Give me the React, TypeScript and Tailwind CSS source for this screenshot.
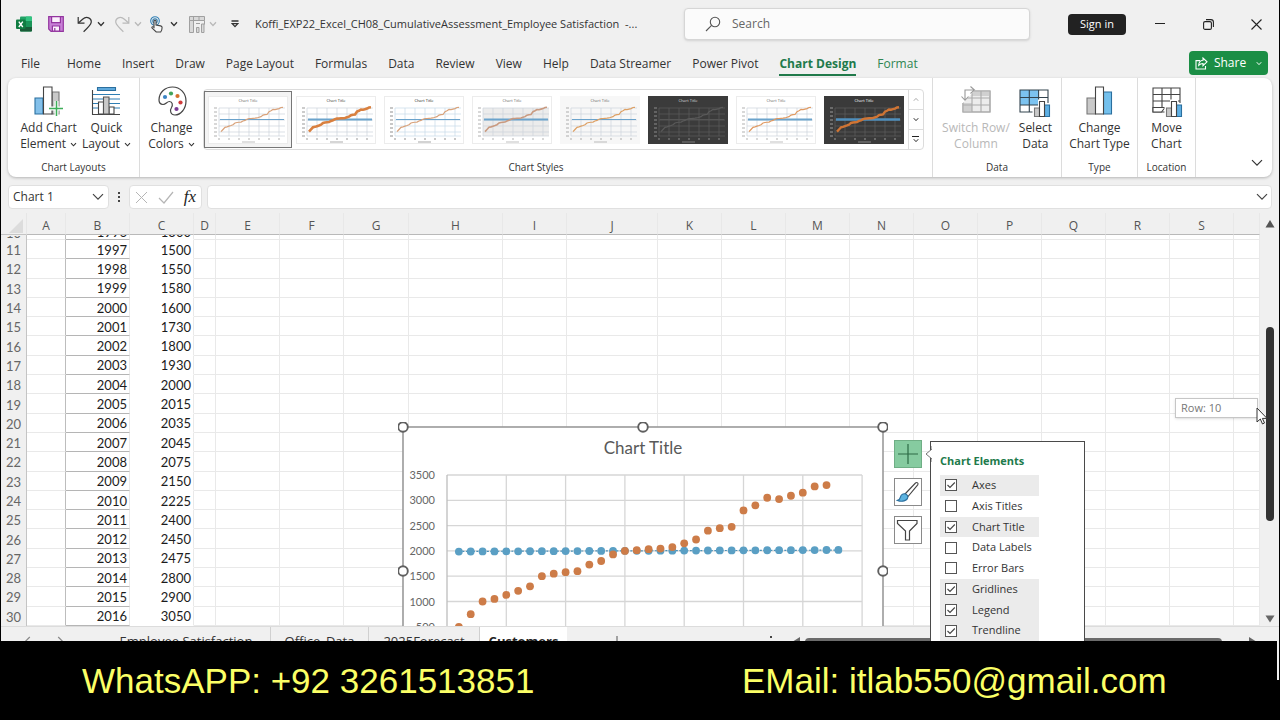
import type { ReactNode } from 'react';
import clsx from 'clsx';

const tabs = [
  'Home', 'Insert', 'Draw', 'Page Layout', 'Formulas', 'Data', 'Review',
  'View', 'Help', 'Data Streamer', 'Power Pivot',
];

const columns = [
  { name: 'A', width: 39 },
  { name: 'B', width: 64 },
  { name: 'C', width: 64 },
  { name: 'D', width: 22 },
  { name: 'E', width: 64 },
  { name: 'F', width: 64 },
  { name: 'G', width: 65 },
  { name: 'H', width: 94 },
  { name: 'I', width: 64 },
  { name: 'J', width: 91 },
  { name: 'K', width: 64 },
  { name: 'L', width: 64 },
  { name: 'M', width: 64 },
  { name: 'N', width: 64 },
  { name: 'O', width: 64 },
  { name: 'P', width: 64 },
  { name: 'Q', width: 64 },
  { name: 'R', width: 64 },
  { name: 'S', width: 64 },
  { name: '', width: 0 },
];

// customers per year, 1987 onwards
const customers = [
  500, 750, 1000, 1050, 1130, 1210, 1300, 1500, 1550, 1580, 1600, 1730, 1800, 1930, 2000, 2015,
  2035, 2045, 2075, 2150, 2225, 2400, 2450, 2475, 2800, 2900, 3050, 3025, 3090, 3150, 3275, 3300,
];

const rows = [
  [1997, 1500], [1998, 1550], [1999, 1580], [2000, 1600], [2001, 1730], [2002, 1800], [2003, 1930],
  [2004, 2000], [2005, 2015], [2006, 2035], [2007, 2045], [2008, 2075], [2009, 2150], [2010, 2225],
  [2011, 2400], [2012, 2450], [2013, 2475], [2014, 2800], [2015, 2900], [2016, 3050],
];

const chartElements = [
  { name: 'Axes', on: true },
  { name: 'Axis Titles', on: false },
  { name: 'Chart Title', on: true },
  { name: 'Data Labels', on: false },
  { name: 'Error Bars', on: false },
  { name: 'Gridlines', on: true },
  { name: 'Legend', on: true },
  { name: 'Trendline', on: true },
];

const Chevron = ({ className = 'h-[6px] w-[8px]' }: { className?: string }) => (
  <svg viewBox="0 0 8 6" className={clsx('shrink-0', className)} fill="none" stroke="currentColor" strokeWidth="1.3">
    <path d="M1 1.3 4 4.5 7 1.3" />
  </svg>
);

const WideChevron = ({ className }: { className?: string }) => (
  <svg viewBox="0 0 12 8" className={clsx('h-2 w-3 shrink-0', className)} fill="none" stroke="currentColor" strokeWidth="1.2">
    <path d="M1 1.200 6 6.200l5-5" />
  </svg>
);

/* ---------- title bar ---------- */

const ExcelLogo = () => (
  <svg viewBox="0 0 16 16" className="h-4 w-4">
    <rect x="4" y="0.5" width="12" height="15" rx="1" fill="#21a366" />
    <path d="M4 5h6v6H4z" fill="#107c41" />
    <path d="M10 0.5h5a1 1 0 0 1 1 1V5h-6z" fill="#33c481" />
    <path d="M10 5h6v6h-6z" fill="#1a9458" />
    <path d="M4 11h12v3.5a1 1 0 0 1-1 1H5a1 1 0 0 1-1-1z" fill="#185c37" />
    <rect x="0" y="3.5" width="9.5" height="9.5" rx="1" fill="#107c41" />
    <path d="m2.800 5.600 4 5.400M6.800 5.600l-4 5.400" stroke="#fff" strokeWidth="1.400" />
  </svg>
);

const SaveIcon = () => (
  <svg viewBox="0 0 16 16" className="h-4 w-4" fill="#c77fd6" stroke="#93359f" strokeWidth="1.2">
    <path d="M.7.7h14.6v14.6H3L.7 13z" />
    <path d="M3.6.7h8.8v6H3.6z" fill="#fbeffc" />
    <path d="M4.4 15.2V10h7.2v5.2z" fill="#fbeffc" />
    <path d="M6.8 15v-3" fill="none" />
  </svg>
);

const UndoIcon = () => (
  <svg viewBox="0 0 16 17" className="h-[17px] w-4" fill="none" stroke="currentColor" strokeWidth="1.2">
    <path d="M1.200 1v6.200h6.300" />
    <path d="M1.400 7 5.600 3.200C9.600-.3 14.800 2 14.200 6.400c-.3 2.300-2.200 4.300-7.600 9.400" />
  </svg>
);

const TouchIcon = () => (
  <svg viewBox="0 0 14 17" className="h-[17px] w-[14px]" fill="none" strokeWidth="1.1">
    <circle cx="5" cy="5" r="4.3" stroke="#2f7fb5" />
    <circle cx="5" cy="5" r="2.2" stroke="#2f7fb5" />
    <path
      d="M4 11.500V5.200c0-1.400 2-1.400 2 0V9l4.600.9c1 .2 1.500.8 1.500 1.700 0 1.600-.5 3.200-1.400 4.400H6.200L2 12c-.5-.9.4-1.600 1.200-1.100z"
      fill="#f7f7f7"
      stroke="#444"
    />
  </svg>
);

const PivotIcon = () => (
  <svg viewBox="0 0 16 17" className="h-[17px] w-4" fill="#d9d9d9" stroke="#a0a0a0">
    <path d="M.5.5h15v4h-15zM.5 4.500h4v12h-4z" />
    <path d="M4.500.5v4M10 .5v4M15.500 4.500v4" fill="none" />
    <path d="M7.500 16.500v-5h2.500v5zM12.500 16.500V8H15v8.500zM7 7.500h4" />
  </svg>
);

const TitleBar = () => (
  <header className="flex h-12 shrink-0 items-center pr-[17px] pl-[15px] text-[#333]">
    <div className="flex items-center">
      <ExcelLogo />
      <button aria-label="Save" className="ml-4"><SaveIcon /></button>
      <button aria-label="Undo" className="ml-[13px] flex items-center gap-1"><UndoIcon /><Chevron /></button>
      <button aria-label="Redo" className="ml-[9px] flex items-center gap-1 text-[#b9b9b9]">
        <span className="-scale-x-100"><UndoIcon /></span>
        <Chevron />
      </button>
      <button aria-label="Touch mode" className="ml-2 flex items-center gap-[6px]"><TouchIcon /><Chevron /></button>
      <button aria-label="PivotTable" className="ml-[11px] flex items-center gap-1 text-[#b9b9b9]"><PivotIcon /><Chevron /></button>
      <button aria-label="Customize toolbar" className="ml-[14px]">
        <svg viewBox="0 0 8 8" className="h-2 w-2" fill="none" stroke="currentColor" strokeWidth="1.3">
          <path d="M.5 1h7M1.200 3.600h5.600L4 6.600z" />
        </svg>
      </button>
    </div>
    <h1 className="ml-4 w-[394px] shrink-0 text-[11px] whitespace-pre">
      Koffi_EXP22_Excel_CH08_CumulativeAssessment_Employee Satisfaction  -...
    </h1>
    <label className="ml-[35px] flex h-8 w-[346px] items-center gap-[11px] rounded border border-[#d6d6d6] bg-[#fbfbfb] px-5 shadow-sm">
      <svg viewBox="0 0 16 16" className="h-4 w-4 shrink-0" fill="none" stroke="#555" strokeWidth="1.100">
        <circle cx="10" cy="6" r="4.700" />
        <path d="M6.600 9.400 1 15" />
      </svg>
      <input type="search" placeholder="Search" className="w-full bg-transparent text-xs outline-none placeholder:text-[#666]" />
    </label>
    <div className="ml-auto flex items-center">
      <button className="h-[21px] w-[58px] rounded-sm bg-[#222] text-[11px] text-white">Sign in</button>
      <button aria-label="Minimize" className="ml-[29px]">
        <svg viewBox="0 0 10 10" className="h-[10px] w-[10px]" stroke="#222"><path d="M0 4.500h10" /></svg>
      </button>
      <button aria-label="Restore" className="ml-[38px]">
        <svg viewBox="0 0 11 11" className="h-[11px] w-[11px]" fill="none" stroke="#222" strokeWidth="1.100">
          <rect x=".6" y="2.600" width="7.800" height="7.800" rx="1.500" />
          <path d="M3 .6h4.900a2.500 2.500 0 0 1 2.500 2.500V8" />
        </svg>
      </button>
      <button aria-label="Close" className="ml-[37px]">
        <svg viewBox="0 0 11 11" className="h-[11px] w-[11px]" stroke="#222" strokeWidth="1.100">
          <path d="m.5.5 10 10M10.500.5l-10 10" />
        </svg>
      </button>
    </div>
  </header>
);

const TabBar = () => (
  <nav className="flex h-[30px] shrink-0 items-center pr-[11px] pl-5 text-xs text-[#333]">
    <div className="flex items-center gap-[21px] pt-[2px] whitespace-nowrap">
      <a href="#file" className="mr-[6px]">File</a>
      {tabs.map(tab => <a key={tab} href={`#${tab}`}>{tab}</a>)}
      <a href="#design" className="-mb-1 border-b-2 border-[#217a4b] pb-0.5 font-bold text-[#217a4b]">Chart Design</a>
      <a href="#format" className="text-[#2f8551]">Format</a>
    </div>
    <button className="ml-auto flex h-6 w-[79px] items-center justify-between rounded bg-[#1b8e45] px-[6px] text-white">
      <svg viewBox="0 0 13 13" className="h-[13px] w-[13px]" fill="none" stroke="currentColor" strokeWidth="1.100">
        <path d="M5 3.600H1v8.400h9.500V9" />
        <path d="M8 1v2.300C5.200 3.500 3.900 5.500 3.700 8.300 5 6.900 6.300 6.500 8 6.500v2.200l4-3.900z" />
      </svg>
      Share
      <Chevron className="ml-1 h-[5px] w-[6px]" />
    </button>
  </nav>
);

/* ---------- ribbon ---------- */

const AddElementIcon = () => (
  <svg viewBox="0 0 30 32" className="h-8 w-[30px]" strokeWidth="1.100">
    <path d="M1 12h8v16H1z" fill="#83c0ea" stroke="#2b6f9e" />
    <path d="M18 6h7v22h-7z" fill="#c9c9c9" stroke="#777" />
    <path d="M9.500 1H18v27H9.500z" fill="#fff" stroke="#444" />
    <path d="M22.500 15v15M15 22.500h14" stroke="#fff" strokeWidth="4" />
    <path d="M22.500 15v15M15 22.500h14" stroke="#3fae5a" strokeWidth="1.500" />
  </svg>
);

const QuickLayoutIcon = () => (
  <svg viewBox="0 0 30 32" className="h-8 w-[30px]" strokeWidth="1.100">
    <path d="M6.500 1.500h18v3h-18z" fill="#5fa9dc" stroke="#2b6f9e" />
    <path d="M2 8.500h27M2 13h27M2 17.500h27M2 22h27" stroke="#2f7fb5" />
    <path d="M1.500 4v24.500H29" fill="none" stroke="#444" />
    <path d="M7.500 16h5v12h-5zM18 21h5v7h-5z" fill="#fff" stroke="#444" />
    <path d="M12.500 11H18v17h-5.500z" fill="#c9c9c9" stroke="#555" />
  </svg>
);

const PaletteIcon = () => (
  <svg viewBox="0 0 30 32" className="h-8 w-[30px]">
    <path
      d="M2 14C2 6 8.500 1 15.500 1 23.500 1 29 7.500 29 15c0 8-5.500 14-11 14-4.500 0-5.500-4.500-3.500-7.500 1.500-2.500 1-6-2-6-2.800 0-3.500 3-6.500 3C3.500 18.500 2 16.500 2 14z"
      fill="#fff"
      stroke="#444"
      strokeWidth="1.200"
    />
    <circle cx="8" cy="11" r="2.100" fill="#3b85c4" />
    <circle cx="14" cy="7.500" r="2.100" fill="#42a35a" />
    <circle cx="20.500" cy="10" r="2.100" fill="#d5702b" />
    <circle cx="23.500" cy="16.500" r="2.100" fill="#cf3b3b" />
    <circle cx="19.500" cy="23" r="2.100" fill="#7b3b93" />
  </svg>
);

const SmallBars = ({ x, y }: { x: number; y: number }) => (
  <g transform={`translate(${x} ${y})`} strokeWidth="1.100">
    <path d="M-1.500 5H4v-6.500h8V2h5v15H-1.500z" fill="#fff" stroke="none" />
    <path d="M.5 7h5v8.500h-5z" fill="#c9c9c9" stroke="#777" />
    <path d="M10.500 4h5v11.500h-5z" fill="#5fb0e4" stroke="#2b6f9e" />
    <path d="M5.500.5h5v15h-5z" fill="#fff" stroke="#444" />
  </g>
);

const SwitchIcon = () => (
  <svg viewBox="0 0 30 32" className="h-8 w-[30px]" fill="none" stroke="#aaa" strokeWidth="1.100">
    <path d="M2 5h27v21H2z" fill="#ececec" />
    <path d="M2 17h9v9H2zM11 5h18v5H11z" fill="#d0d0d0" stroke="none" />
    <path d="M2 5h27v21H2zM11 5v21M20 5v21M2 12h27M2 19h27" />
    <path d="M0 0h18L2 17H0z" fill="#fff" stroke="none" />
    <path d="M4 14V4h9M9.500.5l4 3.500-4 3.500M.5 10.500 4 14.300l3.500-3.800" stroke="#999" />
  </svg>
);

const SelectDataIcon = () => (
  <svg viewBox="0 0 32 32" className="h-8 w-8" strokeWidth="1.100">
    <path d="M1 4h28v22H1z" fill="#fff" />
    <path d="M1 4h18.600v15H1z" fill="#7cc3f0" />
    <path d="M1 4h28v22H1zM10.300 4v22M19.600 4v22M1 11.500h28M1 19h28" fill="none" stroke="#33444f" />
    <SmallBars x={15} y={15} />
  </svg>
);

const ChartTypeIcon = () => (
  <svg viewBox="0 0 30 32" className="h-8 w-[30px]" strokeWidth="1.100">
    <path d="M2 12h8.500v16H2z" fill="#c9c9c9" stroke="#777" />
    <path d="M18.500 6h8v22h-8z" fill="#74c0ec" stroke="#2b6f9e" />
    <path d="M10.500 1h8v27h-8z" fill="#fff" stroke="#444" />
  </svg>
);

const MoveChartIcon = () => (
  <svg viewBox="0 0 32 32" className="h-8 w-8" fill="none" stroke="#444" strokeWidth="1.100">
    <path d="M2 2h27v24H2zM11 2v20M20 2v20M2 8.500h27M2 15h27" />
    <path d="M2 21.500h12l-3.500 4.500H2z" fill="#fff" />
    <SmallBars x={15} y={15} />
  </svg>
);

type RibbonButtonProps = { icon: ReactNode; lines: [string, string]; menu?: boolean; disabled?: boolean };

const RibbonButton = ({ icon, lines, menu, disabled }: RibbonButtonProps) => (
  <button
    disabled={disabled}
    className="flex flex-col items-center text-xs leading-4 whitespace-nowrap text-[#333] disabled:text-[#b8b8b8]"
  >
    {icon}
    <span className="mt-0.5">{lines[0]}</span>
    <span className="flex items-center gap-1">{lines[1]}{menu && <Chevron className="h-[5px] w-[7px]" />}</span>
  </button>
);

const RibbonGroup = ({ label, className, children }: { label: string; className: string; children: ReactNode }) => (
  <section className={clsx('flex flex-col items-center pt-2', className)}>
    <div className="flex w-full flex-1 items-start justify-center">{children}</div>
    <h2 className="pb-[2px] text-[10px] leading-4 text-[#333]">{label}</h2>
  </section>
);

const thumbLine = customers.map((v, i) => `${13 + i * 2},${40 - v / 115}`).join(' ');

type ThumbStyle = { bg: string; grid: string; text: string; line: string; width: number; blue: string; blueWidth: number; plot?: string };

const light: ThumbStyle = { bg: '#ffffff', grid: '#ccd3db', text: '#666', line: '#d9a27a', width: 1.2, blue: '#6ba3cc', blueWidth: 1.2 };

const thumbs: ThumbStyle[] = [
  light,
  { ...light, line: '#d9803f', width: 2.6, blueWidth: 2, text: '#333' },
  { ...light, text: '#222', grid: '#c6dae8' },
  { ...light, line: '#c99a80', width: 1.6, blueWidth: 2, plot: '#ececec' },
  { ...light, bg: '#f7f7f7', line: '#dda064' },
  { ...light, bg: '#3b3b3b', grid: '#5c5c5c', text: '#ddd', line: '#595959', blue: '#555' },
  { ...light, line: '#e09a62', blueWidth: 1.8 },
  { ...light, bg: '#3a3a3a', grid: '#5e5e5e', text: '#fff', line: '#cf7434', width: 2.4, blue: '#4f8fbd', blueWidth: 2.4 },
];

const Thumb = ({ style: s }: { style: ThumbStyle }) => (
  <svg viewBox="0 0 80 48" className="h-12 w-20">
    <rect x=".5" y=".5" width="79" height="47" fill={s.bg} stroke={s.bg === '#ffffff' ? '#ececec' : s.bg} />
    <rect x="11" y="12" width="66" height="28" fill={s.plot ?? 'none'} />
    <text x="40" y="6" fontSize="4" textAnchor="middle" fill={s.text} fontFamily="Open Sans">Chart Title</text>
    <path d="M11 12v28M21 12v28M31 12v28M41 12v28M51 12v28M61 12v28M71 12v28M11 12h66M11 18h66M11 24h66M11 30h66M11 36h66M11 40h66" stroke={s.grid} strokeWidth=".7" fill="none" />
    <path d="M6 12h3M6 16h3M6 20h3M6 24h3M6 28h3M6 32h3M6 36h3M6 40h3" stroke={s.text} strokeOpacity=".5" strokeWidth="1.200" />
    <path d="M10 43h68" stroke={s.text} strokeOpacity=".5" strokeWidth="1.200" strokeDasharray="2 8" />
    <path d="M34 46h13" stroke={s.text} strokeOpacity=".4" />
    <path d="M12 23.500h64" stroke={s.blue} strokeWidth={s.blueWidth} />
    <polyline points={thumbLine} fill="none" stroke={s.line} strokeWidth={s.width} />
  </svg>
);

const Ribbon = () => (
  <div className="mx-[7px] flex h-[99px] shrink-0 divide-x divide-[#dcdcdc] rounded-lg bg-white shadow-[0_1px_3px_rgba(0,0,0,0.25)]">
    <RibbonGroup label="Chart Layouts" className="w-[132px] shrink-0">
      <div className="flex gap-[5px] pl-[4px]">
        <RibbonButton icon={<AddElementIcon />} lines={['Add Chart', 'Element']} menu />
        <RibbonButton icon={<QuickLayoutIcon />} lines={['Quick', 'Layout']} menu />
      </div>
    </RibbonGroup>
    <RibbonGroup label="Chart Styles" className="flex-1">
      <RibbonButton icon={<PaletteIcon />} lines={['Change', 'Colors']} menu />
      <div className="mt-[3px] ml-2 flex h-[61px] rounded-sm border border-[#dcdcdc]">
        <div className="flex items-center">
          {thumbs.map((style, i) => (
            <button
              key={i}
              aria-label={`Style ${i + 1}`}
              className={clsx('flex h-[57px] w-[88px] items-center justify-center', i === 0 && 'border border-[#777] bg-[#f4f4f4]')}
            >
              <Thumb style={style} />
            </button>
          ))}
        </div>
        <div className="flex w-[15px] flex-col divide-y divide-[#dcdcdc] border-l border-[#dcdcdc] text-[#222]">
          <button aria-label="Previous styles" className="flex flex-1 items-center justify-center text-[#aaa]">
            <Chevron className="h-[5px] w-[6px] rotate-180" />
          </button>
          <button aria-label="Next styles" className="flex flex-1 items-center justify-center">
            <Chevron className="h-[5px] w-[6px]" />
          </button>
          <button aria-label="More styles" className="flex flex-1 flex-col items-center justify-center gap-px">
            <span className="h-px w-[7px] bg-[#222]" />
            <Chevron className="h-[5px] w-[6px]" />
          </button>
        </div>
      </div>
    </RibbonGroup>
    <RibbonGroup label="Data" className="w-[129px] shrink-0">
      <div className="flex gap-[9px]">
        <RibbonButton icon={<SwitchIcon />} lines={['Switch Row/', 'Column']} disabled />
        <RibbonButton icon={<SelectDataIcon />} lines={['Select', 'Data']} />
      </div>
    </RibbonGroup>
    <RibbonGroup label="Type" className="w-[76px] shrink-0">
      <RibbonButton icon={<ChartTypeIcon />} lines={['Change', 'Chart Type']} />
    </RibbonGroup>
    <RibbonGroup label="Location" className="w-[58px] shrink-0">
      <RibbonButton icon={<MoveChartIcon />} lines={['Move', 'Chart']} />
    </RibbonGroup>
    <div className="flex w-[76px] shrink-0 items-end justify-end pr-[9px] pb-[10px] text-[#333]">
      <button aria-label="Collapse ribbon" className="block"><WideChevron /></button>
    </div>
  </div>
);

const FormulaBar = () => (
  <div className="mx-[7px] mt-2 flex h-6 shrink-0 items-center text-[#444]">
    <div className="flex h-6 w-[101px] items-center rounded border border-[#e0e0e0] bg-white pr-1 pl-1">
      <input aria-label="Name box" defaultValue="Chart 1" className="w-full min-w-0 text-xs text-[#333] outline-none" />
      <WideChevron />
    </div>
    <svg viewBox="0 0 2 12" className="mx-[9px] h-3 w-[2px]" fill="#444">
      <path d="M0 1h2v2H0zM0 5h2v2H0zM0 9h2v2H0z" />
    </svg>
    <div className="flex h-6 w-[73px] items-center justify-between rounded border border-[#e0e0e0] bg-white px-[5px]">
      <button aria-label="Cancel">
        <svg viewBox="0 0 13 13" className="h-[13px] w-[13px]" stroke="#b5b5b5"><path d="m1 1 11 11M12 1 1 12" /></svg>
      </button>
      <button aria-label="Enter">
        <svg viewBox="0 0 16 13" className="h-[13px] w-4" fill="none" stroke="#b5b5b5" strokeWidth="1.200"><path d="m1 7 5 5L15 1" /></svg>
      </button>
      <button aria-label="Insert function" className="font-['Liberation_Serif',serif] text-[17px] leading-5 text-[#222] italic">fx</button>
    </div>
    <div className="ml-[5px] flex h-6 flex-1 items-center rounded border border-[#e0e0e0] bg-white pr-[3px]">
      <input aria-label="Formula" className="h-full w-full outline-none" />
      <WideChevron />
    </div>
  </div>
);

/* ---------- sheet ---------- */

const cellBorder = (name: string) =>
  clsx('border-r border-b p-0 text-right', {
    'border-[#e9e9e9] border-r-[#bdbdbd]': name === 'A',
    'border-[#e9e9e9] border-b-[#b5b5b5] pr-[2px]': name === 'B',
    'border-[#e9e9e9] border-b-white pr-[2px]': name === 'C',
    'border-[#e9e9e9]': name > 'C' || !name,
  });

const Grid = () => (
  <table className="h-full w-full table-fixed border-separate border-spacing-0 bg-white font-[Lato,sans-serif] text-[13px] leading-[15px] text-[#1c1c1c]">
    <colgroup>
      <col className="w-[26px]" />
      {columns.map(c => <col key={c.name} style={c.width ? { width: c.width } : undefined} />)}
    </colgroup>
    <thead>
      <tr className="h-[22px] bg-[#f0f0f0] font-['Open_Sans',sans-serif] text-xs text-[#555]">
        <th className="border-r border-b border-[#c4c4c4] border-r-[#e6e6e6] p-0 pt-1">
          <svg viewBox="0 0 14 14" className="ml-2 h-[14px] w-[14px]" fill="#dcdcdc"><path d="M14 0v14H0z" /></svg>
        </th>
        {columns.map(c => (
          <th key={c.name} className="border-r border-b border-r-[#e8e8e8] border-b-[#b9b9b9] p-0 pt-[5px] font-normal">{c.name}</th>
        ))}
      </tr>
    </thead>
    <tbody>
      {/* row 10 is scrolled almost out of view */}
      <tr className="h-[5px]">
        <th className="border-r border-[#c4c4c4] bg-[#f0f0f0] p-0 font-normal text-[#666]">
          <div className="flex h-1 items-end justify-center overflow-hidden leading-[14px]">10</div>
        </th>
        {columns.map(c => (
          <td key={c.name} className={cellBorder(c.name)}>
            {(c.name === 'B' || c.name === 'C') && (
              <div className="flex h-1 items-end justify-end overflow-hidden leading-[14px]">{c.name === 'B' ? 1996 : 1300}</div>
            )}
          </td>
        ))}
      </tr>
      {rows.map((row, i) => (
        <tr key={row[0]}>
          <th className="border-r border-[#c4c4c4] bg-[#f0f0f0] p-0 pt-[2px] font-normal text-[#666]">{i + 11}</th>
          {columns.map((c, n) => (
            <td key={c.name} className={clsx(cellBorder(c.name), 'pt-[2px]')}>
              {n === 1 || n === 2 ? row[n - 1] : null}
            </td>
          ))}
        </tr>
      ))}
    </tbody>
  </table>
);

const plotX = (year: number) => 44 + (year - 1986) * 11.86;
const plotY = (value: number) => 48 + ((3500 - value) / 500) * 25.3;
const axis = [3500, 3000, 2500, 2000, 1500, 1000, 500];

const Chart = () => (
  <svg viewBox="0 0 490 290" className="absolute top-[213px] left-[397px] h-[290px] w-[490px] font-[Lato,sans-serif]">
    <g transform="translate(5 5)">
      <rect x="0" y="0" width="480" height="288" fill="#fff" stroke="#9a9a9a" strokeWidth="1.600" />
      <text x="240" y="27" fontSize="17" textAnchor="middle" fill="#595959">Chart Title</text>
      {axis.map(v => (
        <g key={v}>
          <path d={`M44 ${plotY(v)}H459`} stroke="#d6d6d6" strokeWidth="1.300" />
          <text x="32" y={plotY(v) + 4} fontSize="11" textAnchor="end" fill="#666">{v}</text>
        </g>
      ))}
      {[0, 1, 2, 3, 4, 5, 6, 7].map(n => (
        <path key={n} d={`M${44 + n * 59.3} 48V288`} stroke={n ? '#d6d6d6' : '#bdbdbd'} strokeWidth="1.300" />
      ))}
      <path d={`M${plotX(1987)} ${plotY(1990)}L${plotX(2019)} ${plotY(2015)}`} stroke="#4a90b8" strokeWidth="1.200" strokeDasharray="2 1.500" />
      {Array.from({ length: 33 }, (_, i) => (
        <circle key={i} cx={plotX(1987 + i)} cy={plotY(1987 + i)} r="3.900" fill="#5a9fc4" />
      ))}
      {customers.map((v, i) => (
        <circle key={i} cx={plotX(1987 + i)} cy={plotY(v)} r="3.900" fill="#cd7c48" />
      ))}
      {[[0, 0], [240, 0], [480, 0], [0, 144], [480, 144]].map(([x, y]) => (
        <circle key={`${x}-${y}`} cx={x} cy={y} r="4.800" fill="#fff" stroke="#606060" strokeWidth="1.900" />
      ))}
    </g>
  </svg>
);

const ChartButtons = () => (
  <div className="absolute top-[231px] left-[893px] flex flex-col gap-[10px]">
    <button aria-label="Chart elements" className="h-7 w-7 border border-[#6fae85] bg-[#86cba0]">
      <svg viewBox="0 0 26 26" stroke="#2c6b45" strokeWidth="1.200"><path d="M13 3v20M3 13h20" /></svg>
    </button>
    <button aria-label="Chart styles" className="h-7 w-7 border border-[#8a8a8a] bg-white">
      <svg viewBox="0 0 26 26" fill="#fff" stroke="#444" strokeWidth="1.100">
        <path d="M10 15 20.500 4c1.600-1.300 3.300.3 2.200 1.900L13 17.500z" />
        <path d="M9.500 14.800c1.800 0 3.500 1.600 3.300 3.600-.4 3.400-6 4.800-10.300 3 2-.5 2.500-1.500 3-3.400.5-1.900 2-3.200 4-3.200z" fill="#5cb3e0" stroke="#2b6f9e" />
      </svg>
    </button>
    <button aria-label="Chart filters" className="h-7 w-7 border border-[#8a8a8a] bg-white">
      <svg viewBox="0 0 26 26" fill="#fff" stroke="#444" strokeWidth="1.200">
        <path d="M2.500 3.500h19.500v3L14.500 14v9h-4v-9L2.500 6.500z" />
      </svg>
    </button>
  </div>
);

const ElementsPopup = () => (
  <div className="absolute top-[232px] left-[929px] z-20 h-[230px] w-[155px] border border-[#4a4a4a] bg-white pt-[10px] pl-[9px]">
    <svg viewBox="0 0 7 16" className="absolute top-[4px] -left-[6px] h-4 w-[7px]" fill="#fff" stroke="#777">
      <path d="M7 0v3L1 8l6 5v3" />
    </svg>
    <h3 className="text-[11px] leading-[18px] font-bold text-[#217a4b]">Chart Elements</h3>
    <ul className="mt-[5px] flex h-[166px] w-[99px] flex-col">
      {chartElements.map(el => (
        <li key={el.name} className={clsx('flex-1', el.on && 'bg-[#ebebeb]')}>
          <label className="flex h-full items-center text-[11px] whitespace-nowrap text-[#333]">
            <span className="relative ml-[5px] h-3 w-3 shrink-0">
              <input type="checkbox" defaultChecked={el.on} className="peer block h-3 w-3 appearance-none border border-[#555] bg-white" />
              <svg viewBox="0 0 12 12" className="absolute inset-0 hidden h-3 w-3 peer-checked:block" fill="none" stroke="#444" strokeWidth="1.100">
                <path d="m2.500 6 2.500 2.500L9.800 3.500" />
              </svg>
            </span>
            <span className="ml-[15px]">{el.name}</span>
          </label>
        </li>
      ))}
    </ul>
  </div>
);

const VerticalScroll = () => (
  <div className="flex w-[19px] shrink-0 flex-col items-center bg-[#f0f0f0] pt-[7px] pb-[3px]">
    <svg viewBox="0 0 10 8" className="h-2 w-[10px]" fill="#555"><path d="M5 0 9.500 7.500H.5z" /></svg>
    <div className="flex w-2 flex-1 flex-col">
      <div className="flex-[99]" />
      <div className="flex-[193] rounded-full bg-[#333]" />
      <div className="flex-[94]" />
    </div>
    <svg viewBox="0 0 10 8" className="h-2 w-[10px]" fill="#666"><path d="M5 7.500 9.500.5H.5z" /></svg>
  </div>
);

const SheetTabs = () => (
  <div className="relative z-10 h-[15px] shrink-0 overflow-hidden border-t border-[#dcdcdc] bg-[#f0f0f0]">
    <div className="flex h-[30px] items-center text-[13px] text-[#333]">
      <div className="flex w-[101px] shrink-0 items-center gap-[22px] pl-[20px] text-[#888]">
        <WideChevron className="rotate-90" />
        <WideChevron className="-rotate-90" />
      </div>
      <button className="h-full w-[169px] shrink-0 border-r border-[#d0d0d0]">Employee Satisfaction</button>
      <button className="h-full w-[98px] shrink-0 border-r border-[#d0d0d0]">Office_Data</button>
      <button className="h-full w-[111px] shrink-0 border-r border-[#d0d0d0]">2025Forecast</button>
      <button className="h-full w-[87px] shrink-0 bg-white font-bold text-[#222]">Customers</button>
      <button aria-label="New sheet" className="ml-[44px]">
        <svg viewBox="0 0 12 12" className="h-3 w-3" stroke="#555"><path d="M6 0v12M0 6h12" /></svg>
      </button>
      <div className="ml-auto flex w-[509px] items-center">
        <svg viewBox="0 0 2 12" className="h-3 w-[2px]" fill="#444"><path d="M0 0h2v2H0zM0 5h2v2H0zM0 10h2v2H0z" /></svg>
        <svg viewBox="0 0 8 10" className="ml-5 h-[10px] w-2" fill="#666"><path d="M8 0v10L0 5z" /></svg>
        <div className="ml-[5px] h-2 w-[417px] rounded-full bg-[#6b6b6b]" />
        <svg viewBox="0 0 8 10" className="ml-auto mr-[22px] h-[10px] w-2" fill="#666"><path d="M0 0v10l8-5z" /></svg>
      </div>
    </div>
  </div>
);

const Sheet = () => (
  <main className="relative flex min-h-0 flex-1 flex-col overflow-hidden pt-1">
    <div className="flex min-h-0 flex-1">
      <div className="min-w-0 flex-1"><Grid /></div>
      <VerticalScroll />
    </div>
    <Chart />
    <ChartButtons />
    <ElementsPopup />
    <div className="absolute top-[189px] right-[21px] h-5 w-[83px] border border-[#c6c6c6] bg-white pl-[5px] text-[11px] leading-[18px] text-[#777] shadow-sm">
      Row: 10
    </div>
    <svg viewBox="0 0 12 18" className="absolute top-[198px] right-[11px] h-[18px] w-3" fill="#fff" stroke="#333">
      <path d="M1 1v14l3.300-3 2.200 5 2-1-2.100-4.600H11z" />
    </svg>
    <SheetTabs />
  </main>
);

export default function App() {
  return (
    <div className="flex h-screen flex-col overflow-hidden bg-black font-['Open_Sans',sans-serif]">
      <div className="mr-px ml-px flex min-h-0 flex-1 flex-col bg-[#f0f0f0]">
        <TitleBar />
        <TabBar />
        <Ribbon />
        <FormulaBar />
        <Sheet />
      </div>
      <footer className="mr-px flex h-[79px] shrink-0 items-start bg-black font-['Liberation_Sans',Arial,sans-serif] text-[35px] text-[#fbff66]">
        <p className="w-[742px] pt-[19px] pl-[82px] leading-[42px]">WhatsAPP: +92 3261513851</p>
        <p className="pt-[19px] leading-[42px]">EMail: itlab550@gmail.com</p>
        <span className="ml-auto h-[39px] w-[2px] bg-[#f0f0f0]" />
      </footer>
    </div>
  );
}
